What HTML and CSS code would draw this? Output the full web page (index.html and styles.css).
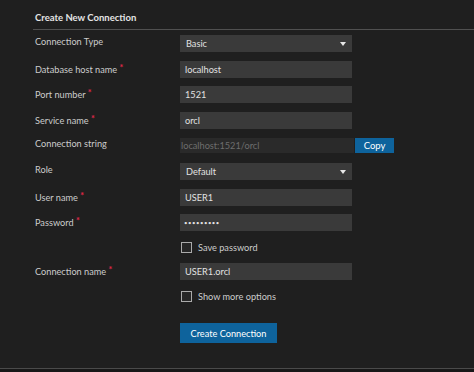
FILE: index.html
```html
<!DOCTYPE html>
<html lang="en">

<head>
  <meta charset="UTF-8" />
  <title>Create New Connection</title>
  <link rel="stylesheet" href="styles.css">
</head>

<body>
  <div class="panel">
    <h1 class="titulo">Create New Connection</h1>

    <form class="form">
      <div class="row">
        <label>Connection Type</label>
        <div class="select">Basic<span class="arrow"></span></div>
      </div>

      <div class="row">
        <label>Database host name <span class="req">*</span></label>
        <div class="input">localhost</div>
      </div>

      <div class="row">
        <label>Port number <span class="req">*</span></label>
        <div class="input">1521</div>
      </div>

      <div class="row">
        <label>Service name <span class="req">*</span></label>
        <div class="input">orcl</div>
      </div>

      <div class="row">
        <label>Connection string</label>
        <div class="input disabled">localhost:1521/orcl</div>
        <button type="button" class="btn copy">Copy</button>
      </div>

      <div class="row">
        <label>Role</label>
        <div class="select">Default<span class="arrow"></span></div>
      </div>

      <div class="row">
        <label>User name <span class="req">*</span></label>
        <div class="input">USER1</div>
      </div>

      <div class="row">
        <label>Password <span class="req">*</span></label>
        <div class="input dots">&bull;&bull;&bull;&bull;&bull;&bull;&bull;&bull;&bull;</div>
      </div>

      <div class="row check-row">
        <label></label>
        <div class="check"><span class="box"></span>Save password</div>
      </div>

      <div class="row">
        <label>Connection name <span class="req">*</span></label>
        <div class="input">USER1.orcl</div>
      </div>

      <div class="row check-row">
        <label></label>
        <div class="check"><span class="box"></span>Show more options</div>
      </div>

      <div class="row submit-row">
        <label></label>
        <button type="button" class="btn create">Create Connection</button>
      </div>
    </form>
  </div>
  <div class="bottom"></div>
</body>

</html>
```

FILE: styles.css
```css
* {
  box-sizing: border-box;
  margin: 0;
  padding: 0;
}

body {
  width: 474px;
  height: 372px;
  background: #1f1f1f;
  color: #cccccc;
  font-family: Lato, "Open Sans", sans-serif;
  font-size: 9.2px;
  overflow: hidden;
}

.panel {
  padding-left: 33px;
  height: 368px;
}

.titulo {
  font-size: 9.5px;
  font-weight: 700;
  color: #e4e4e4;
  padding: 12px 0 0 2px;
  height: 30px;
  border-bottom: 1px solid #505050;
}

/* Linhas do formulario */
.form {
  padding-top: 5px;
  padding-left: 2px;
}

.row {
  display: flex;
  align-items: flex-start;
  height: 25.6px;
}

.row label {
  width: 145px;
  flex-shrink: 0;
  line-height: 13px;
}

.req {
  color: #e0284a;
  font-size: 9px;
  font-weight: 700;
  vertical-align: 2px;
}

.input,
.select {
  position: relative;
  width: 172px;
  height: 17px;
  line-height: 17px;
  padding-left: 5px;
  background: #3a3a3a;
  color: #e2e2e2;
}

.select {
  padding-left: 6px;
}

.arrow {
  position: absolute;
  right: 6px;
  top: 7px;
  border-left: 3.5px solid transparent;
  border-right: 3.5px solid transparent;
  border-top: 4px solid #e8e8e8;
}

.input.disabled {
  width: 174px;
  background: #2a2a2a;
  color: #6e6e6e;
  padding-left: 1px;
  height: 15px;
  line-height: 15px;
  margin-top: 1px;
}

.dots {
  font-size: 6px;
  letter-spacing: 0.5px;
  padding-left: 4px;
}

.btn {
  border: none;
  background: #0e639c;
  color: #ffffff;
  font-family: Lato, "Open Sans", sans-serif;
  font-size: 9.2px;
}

.copy {
  width: 39px;
  height: 15px;
  margin-left: 1px;
  margin-top: 1px;
  font-size: 9.5px;
}

.check-row {
  height: 23.4px;
}

.check {
  display: flex;
  align-items: center;
  gap: 6px;
  margin-top: 2.4px;
  margin-left: 1px;
  line-height: 11px;
}

.box {
  width: 11px;
  height: 11px;
  border: 1px solid #aaaaaa;
  background: #262626;
}

.submit-row {
  padding-top: 11px;
}

.create {
  width: 97px;
  height: 20px;
}

.bottom {
  height: 4px;
  border-top: 1px solid #4a4a4a;
  background: #181818;
}
```
